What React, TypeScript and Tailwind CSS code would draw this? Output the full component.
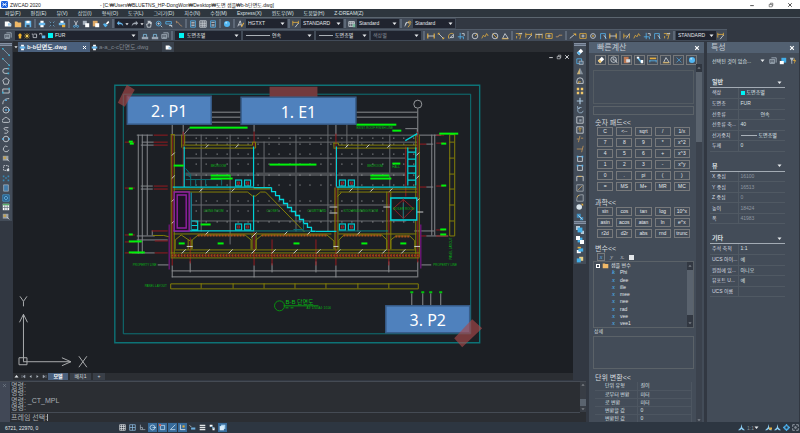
import type { ReactNode } from "react";

const W = "#d5dae0";
const B = "#55b4ee";
const Y = "#e3ad3e";

// 10x10 tool glyphs
const ICONS: Record<string, ReactNode> = {
  new: <><path d="M1 2h5l3 3v3H1z" fill="#fff" /><path d="M5 4h4v3H5z" fill="#9fc9e8" /></>,
  open: <path d="M1 2h3l1 1h4v6H1z" fill="#f0b968" />,
  save: <><path d="M1 1h8v8H1z" fill="#67b7ec" /><path d="M3 1h4v3H3z" fill="#fff" /><path d="M3 6h4v3H3z" fill="#3b4b5c" /></>,
  print: <><path d="M3 1h4v3H3zM3 6h4v3H3z" fill="#fff" /><path d="M1 3.500h8v3H1z" fill="#67b7ec" /></>,
  preview: <><path d="M2 2l6 6M8 2L2 8" stroke="#6fa9d0" /><path d="M3.500 3.500h3v3h-3z" fill="#31404f" /></>,
  publish: <><path d="M3 1h4v3H3z" fill="#fff" /><path d="M1 3.500h8v3H1z" fill="#67b7ec" /><path d="M5 6h4v3H5z" fill={Y} /></>,
  cut: <><path d="M3 1l3 6M7 1L4 7" stroke={W} fill="none" /><circle cx="3" cy="8" r="1.200" stroke={B} fill="none" /><circle cx="7" cy="8" r="1.200" stroke={B} fill="none" /></>,
  copy: <><path d="M1 1h5v5H1z" fill="#a9b4c0" /><path d="M4 4h5v5H4z" fill="#fff" /></>,
  paste: <><path d="M1 1h6v7H1z" fill="#dca765" /><path d="M4 4h5v5H4z" fill="#fff" /></>,
  brush: <><path d="M5 4l3-3 1 2-3 3z" fill="#fff" /><path d="M1 5l3-1 3 3-3 2z" fill={B} /></>,
  undo: <path d="M1 4l3-3v2c4 0 5 2 5 5-1-2-2-3-5-3v2z" fill="#67b7ec" />,
  redo: <path d="M9 4L6 1v2C2 3 1 5 1 8c1-2 2-3 5-3v2z" fill="#a0a8b2" />,
  caret: <path d="M1 3h8l-4 5z" fill="#e8ebee" />,
  caretUp: <path d="M1 7h8L5 2z" fill="#e8ebee" />,
  hand: <path d="M2 5l1 4h4l1-6-1 2V2L6 4V1L5 4 4 1v4z" fill="none" stroke={W} />,
  zoom: <><circle cx="4.500" cy="4.500" r="3" fill="none" stroke={B} /><path d="M7 7l2 2M4.500 3v3M3 4.500h3" stroke={W} /></>,
  zoomWin: <><path d="M1 2h7v3H1z" fill="none" stroke={B} /><path d="M5 7h4M7 6l2 3" stroke={W} /></>,
  zoomPrev: <path d="M1 2l3 1 2 3 3 2M2 1v3" fill="none" stroke="#b28d68" />,
  props: <><path d="M2 1h6v8H2z" fill="none" stroke={B} /><path d="M3 3h4M3 5h4M3 7h4" stroke={W} /></>,
  table: <path d="M1 1h8v8H1zM1 4h8M1 6.500h8M4 1v8M6.500 1v8" fill="none" stroke={W} />,
  tableGreen: <><path d="M1 1h8v8H1z" fill="#fff" /><path d="M1 1h8v2H1z" fill="#59af6c" /><path d="M1 5.500h8M3.500 3v6M6.500 3v6" stroke="#65717d" /></>,
  calc: <><path d="M2 1h6v8H2z" fill="none" stroke={B} /><path d="M3 3h4M4 5v3M6 5v3" stroke={W} /></>,
  help: <><circle cx="5" cy="5" r="3.800" fill="#52b6f2" /><circle cx="4" cy="3.500" r="1.300" fill="#a5def9" /></>,
  text: <><path d="M1 8l3-7 2 7M2 6h3" fill="none" stroke={W} /><path d="M5 8l3-5 1 1-3 5z" fill={Y} /></>,
  dimStyle: <><path d="M1 1v6M8 1v4M1 3h7" stroke={Y} fill="none" /><path d="M4 9l4-5" stroke={W} /></>,
  tableStyle: <><path d="M1 2h7v6H1zM1 4h7M3.500 2v6M6 2v6" stroke={W} fill="none" /><path d="M6 5h3v4H6z" fill="#76b99a" /></>,
  leader: <><path d="M1 8l2-5h4M3 3l-1 3" stroke={W} fill="none" /><circle cx="7" cy="3" r="1.500" fill="none" stroke={Y} /><path d="M5 9l3-4" stroke={Y} /></>,
  layers: <><path d="M1 3h6v5H1z" stroke="#aab6c2" fill="none" /><path d="M3 1h6v6M2 5h4M2 7h4" stroke="#aab6c2" fill="none" /></>,
  layerUp: <><path d="M1 6h8v3H1z" fill="#9aa6b3" /><path d="M3 6V3h4v3" stroke="#7ec1e5" fill="none" /></>,
  bulb: <path d="M5 1a3 3 0 012 5v3H3V6a3 3 0 012-5z" fill="#f3b32b" />,
  sun: <><path d="M1 1l8 8M9 1L1 9M5 0v10M0 5h10" stroke="#d7a72e" /><circle cx="5" cy="5" r="2" fill="#f5d15a" /></>,
  plot: <path d="M1 3h2v5h5V5M4 3h4v3" stroke={W} fill="none" />,
  lock: <><path d="M1 4V2h3v3" stroke={W} fill="none" /><path d="M4 5h5v4H4z" fill="#61b7ea" /></>,
  dimLin: <><path d="M1 2v6M9 2v6" stroke={Y} strokeWidth="1.500" /><path d="M1 5h8" stroke={W} /></>,
  dimAli: <><path d="M2 2l6 6" stroke={W} /><path d="M1 3l2-2M7 9l2-2" stroke={Y} strokeWidth="1.500" /></>,
  dimArc: <><path d="M2 8C1 3 4 1 8 2" stroke={Y} fill="none" /><path d="M3 8l5-5v4H4" stroke={W} fill="none" /></>,
  dimOrd: <><path d="M1 6h7v3M4 1v8" stroke={B} fill="none" /><path d="M6 2h3v3" stroke={W} fill="none" /></>,
  circle: <><circle cx="5" cy="5" r="3.500" fill="none" stroke={W} /><path d="M5 5l3-3" stroke={Y} /></>,
  circleBlue: <><circle cx="5" cy="5" r="3.800" fill="none" stroke={W} /><path d="M4 4h2v2H4zM8 4h2v2H8z" fill={B} /></>,
  jog: <path d="M1 8l2-4 2 2 2-4 2 3" stroke={Y} fill="none" />,
  dia: <><circle cx="5" cy="5" r="3.500" fill="none" stroke={W} /><path d="M2 2l6 6" stroke={Y} /></>,
  angle: <><path d="M2 8l3-6 4 6z" fill="none" stroke={W} /><path d="M1 8.500h8" stroke={Y} /></>,
  quick: <><path d="M1 2h4v3M2 8V5M8 1L6 9" fill="none" stroke={Y} /><path d="M5 2h4" stroke={W} /></>,
  base: <><path d="M1 2v6M5 2v6M9 2v6" stroke={Y} /><path d="M1 3h8" stroke={W} /></>,
  dimBox: <><path d="M1 2h8v6H1z" fill="none" stroke={Y} /><path d="M3 5h4M5 3v4" stroke={W} /></>,
  dimBrk: <path d="M1 6h3l1-2h4" fill="none" stroke="#c99c62" />,
  arrow: <><path d="M1 8l6-5" stroke={W} /><path d="M5 2h4v3z" fill={Y} /></>,
  center: <><circle cx="5" cy="5" r="3" fill="none" stroke={W} /><path d="M4 5h2M5 4v2" stroke={Y} /></>,
  inspect: <><path d="M2 9V2h6v7" stroke={B} fill="none" /><path d="M6 4l3 4" stroke={W} /></>,
  edit: <><path d="M1 2v6M8 2v6M1 5h4" stroke={Y} /><path d="M4 8l4-6" stroke={W} /></>,
  line: <><path d="M1 1l8 8" stroke="#91a0af" /><path d="M0 0h2v2H0zM8 8h2v2H8z" fill="#39a9ce" /></>,
  pline: <><path d="M8 2H4a2.500 2.500 0 000 6h4" fill="none" stroke={W} /><path d="M7 1h2v2H7zM7 7h2v2H7z" fill="#39a9ce" /></>,
  poly: <path d="M5 1l4 3-1.500 5h-5L1 4z" fill="none" stroke={W} />,
  rect: <><path d="M1 2.500h8v5H1z" stroke={W} fill="none" /><path d="M0 6h2v2H0zM8 1h2v2H8z" fill="#39a9ce" /></>,
  arc: <><path d="M1 9c0-5 3-7 8-7" fill="none" stroke={W} /><path d="M4 3h2v2H4z" fill={B} /></>,
  cloud: <path d="M2 8a2 2 0 010-4c1-3 5-3 6 0a2 2 0 010 4z" fill="none" stroke={W} />,
  spline: <path d="M8 2H4C1 3 3 5 5 5s4 2 1 4H3" fill="none" stroke={W} />,
  ellipse: <><circle cx="5" cy="5" r="3.500" fill="none" stroke={W} /><path d="M0 4h2v2H0zM8 4h2v2H8z" fill={B} /></>,
  earc: <path d="M7 2a3.500 3.500 0 10 1.500 4" fill="none" stroke={W} />,
  block: <><path d="M1 1h7v6H1z" fill="#9ba1a5" /><path d="M2 2h3v3H2z" fill="#c0a050" /><path d="M6 5l3 3" stroke={W} /></>,
  mkBlock: <><path d="M2 2h6v6H2z" fill="none" stroke={W} strokeDasharray="2 1" /><path d="M6 6h3v3H6z" fill={W} /></>,
  point: <path d="M1 2h2v2H1zM7 2h2v2H7zM4 4h2v2H4zM1 7h2v2H1zM7 7h2v2H7z" fill="#3788b4" />,
  hatch: <><path d="M2 1h6v8H2z" fill="#427ba9" stroke={W} strokeWidth=".6" /></>,
  region: <><path d="M1 1h8v8H1z" fill="#275b84" stroke="#4699d0" /><circle cx="5" cy="5" r="2" fill="none" stroke="#6cb9e7" /></>,
  eraser: <><path d="M1 6l5-5 3 3-5 5z" fill="#fff" /><path d="M1 6l2-2 3 3-2 2z" fill="#5bb5eb" /></>,
  clear: <><path d="M1 6l5-5 3 3-5 5z" fill="#fff" /><path d="M1 6l2-2 3 3-2 2z" fill="#ecc46c" /></>,
  copyBlue: <><path d="M1 1h6v6H1z" fill="none" stroke={B} /><path d="M4 4h5v4H4z" fill="#516d84" stroke={W} strokeWidth=".7" /></>,
  mirror: <><path d="M5 1v8H1z" fill="#c9b27a" /><path d="M5 1l4 8H5z" fill="#848f9a" /></>,
  offset: <><path d="M1 8V5a4 4 0 018 0v3z" fill="none" stroke={W} /><path d="M3 8V6h3" stroke={Y} fill="none" /></>,
  array: <path d="M1 1h3v3H1zM6 1h3v3H6zM1 6h3v3H1zM6 6h3v3H6z" fill="#f1c76a" />,
  move: <path d="M5 1v8M1 5h8" stroke="#a9c5dc" strokeWidth="1.500" />,
  rotate: <path d="M7 2a3.500 3.500 0 102 4M2 0v3h3" fill="none" stroke="#9dbad2" />,
  scale: <><path d="M1 1h8v8H1z" fill="none" stroke={W} /><path d="M4 4h3v3H4z" fill="#8b97a2" /></>,
  stretch: <><path d="M1 1h8v8H1z" fill="none" stroke={W} /><path d="M5 7V3M3 4l2-2 2 2" stroke={Y} fill="none" /></>,
  trim: <path d="M1 5h3M6 4h3M5 1L3 9" fill="none" stroke="#c49758" />,
  extend: <path d="M1 5h7M9 1L7 9" fill="none" stroke="#c49758" />,
  brk: <><path d="M2 2h6v6H2z" fill="none" stroke={W} /><path d="M1 1h2v2H1zM7 1h2v2H7z" fill={B} /></>,
  join: <><path d="M1 9V3h8v6" fill="none" stroke={W} /><path d="M3 3h4" stroke={Y} /></>,
  chamfer: <><path d="M1 1h8v8H1z" fill="none" stroke="#a8b0b8" /><path d="M2 8l6-6" stroke="#ba9a64" /></>,
  fillet: <><path d="M1 9V6a5 5 0 015-5h3v8z" fill="none" stroke="#a8b0b8" /><path d="M1 4l3-3" stroke={Y} /></>,
  explode: <><circle cx="4" cy="5" r="3.500" fill="#d9e4eb" /><path d="M6 1h3v3z" fill={Y} /></>,
  pack: <><path d="M1 1h5v5H1zM5 5h4v4H5z" fill="#408fc0" /><path d="M3 3l5 5" stroke={W} /></>,
  front: <><path d="M0 0h5v5H0zM6 6h4v4H6z" fill="#b7c9d5" /><path d="M2 2h6v6H2z" fill="#43afe9" /></>,
  back: <><path d="M2 2h6v6H2z" fill="#43afe9" /><path d="M0 0h5v5H0zM5 5h5v5H5z" fill="#fff" /></>,
  above: <><path d="M1 5h5v4H1z" fill="#fff" /><path d="M3 3h6v4H3z" fill="#43afe9" /><path d="M2 1h4v2H2z" fill={Y} /></>,
  below: <><path d="M4 1h5v5H4z" fill="#e7cf86" /><path d="M1 3h5v5H1z" fill="#43afe9" /></>,
  select: <><path d="M3 1h6v6H3z" fill="#43afe9" /><path d="M1 5h5v4H1z" fill="#fff" /></>,
  filter: <><path d="M1 1h5L4 5v4L3 8V5z" fill="#b9c3cc" /><path d="M7 1L5 5h2L6 9l3-5H7z" fill={Y} /></>,
  clock: <><circle cx="4.500" cy="4.500" r="3.500" fill="none" stroke={W} /><path d="M4 2v3h3l2 4" stroke={W} fill="none" /></>,
  pasteVal: <><path d="M1 1h6v8H1z" fill="#be7954" /><path d="M4 4h5v4H4z" fill={W} /></>,
  pick: <><path d="M2 2l5 6" stroke="#63b8e8" strokeWidth="2" /><path d="M1 1h3v2H1zM6 5h3v4H6z" fill="#fff" /></>,
  dist: <><path d="M1 2h8v2H1z" fill={Y} /><path d="M1 6h8M1 5v3M9 5v3" stroke={B} /></>,
  cross: <path d="M2 2l6 6M8 2L2 8" stroke="#4b9ad0" />,
  x: <path d="M2 2l6 6M8 2L2 8" stroke="#fff" strokeWidth="2" />,
  xGray: <path d="M2 2l6 6M8 2L2 8" stroke="#858e99" />,
  min: <path d="M2 6h6" stroke="currentColor" strokeWidth="1.500" />,
  max: <path d="M2 4h5v4H2zM4 4V2h4v4H7" fill="none" stroke="currentColor" />,
  close: <path d="M2 2l6 6M8 2L2 8" stroke="currentColor" strokeWidth="1.500" />,
  grid: <path d="M1 1h8v8H1zM1 5h8M5 1v8" stroke="#8fc0e6" fill="none" />,
  snap: <path d="M1 1h8v8H1zM1 3.500h8M1 6.500h8M3.500 1v8M6.500 1v8" stroke="#e2e5e8" fill="none" />,
  ortho: <path d="M2 1v7h7M2 5h3v3" stroke="#a8b3be" fill="none" />,
  polar: <><circle cx="5" cy="5" r="3.500" stroke="#cfe5f7" fill="none" /><path d="M5 5h5" stroke="#cfe5f7" /></>,
  osnap: <><path d="M2 2h6v6H2z" stroke="#cfe5f7" fill="none" /><path d="M0 0h3v3H0z" fill="#c8655e" /></>,
  track: <path d="M9 1L2 8h7" stroke="#d7e9f8" fill="none" />,
  ucs: <><path d="M2 1v7h7" stroke="#fff" fill="none" /><path d="M5 2h3v3H5z" fill={Y} /></>,
  dyn: <><path d="M1 2l2 2" stroke="#fff" /><path d="M3 5h6v3H3z" fill="#6faedc" /></>,
  lw: <path d="M1 2h8M1 5h8M1 8h8" stroke="#e3e6e8" strokeWidth="2" />,
  cycle: <><path d="M1 1h4v3H1zM5 5h3v4H5z" fill="#fff" /><path d="M3 3l4 4" stroke={B} /></>,
  modelSpace: <><path d="M3 1h6v6H3z" fill="#aad5f3" /><path d="M1 3h6v6H1z" fill="#d9ecf9" /></>,
  anno: <path d="M5 0l1 5 4 4H7L5 7 3 9H0l4-4z" fill="#8ccdf3" />,
  annoY: <><path d="M5 0l1 5 4 4H7L5 7 3 9H0l4-4z" fill="#8ccdf3" /><path d="M6 5h4v3H6z" fill={Y} /></>,
  gear: <><circle cx="5" cy="5" r="2.700" fill="none" stroke="#49a9e4" strokeWidth="2" /><path d="M5 0v2M5 8v2M0 5h2M8 5h2" stroke="#49a9e4" strokeWidth="2" /></>,
  full: <path d="M1 4V1h3M6 1h3v3M9 6v3H6M4 9H1V6M4 4h2v2H4z" fill="none" stroke="#b8c0c8" />,
  logo: <><rect width="10" height="10" rx="2" fill="#1c62e0" /><path d="M2 2l6 6M8 2L2 8M2 5h6" stroke="#fff" fill="none" /></>,
  first: <path d="M2 2v6M8 2L4 5l4 3z" stroke="#9aa3ad" fill="#9aa3ad" />,
  prev: <path d="M7 2L3 5l4 3z" fill="#b0b8c0" />,
  next: <path d="M3 2l4 3-4 3z" fill="#b0b8c0" />,
  last: <path d="M8 2v6M2 2l4 3-4 3z" stroke="#9aa3ad" fill="#9aa3ad" />,
};

function Icon({ name, className = "size-[8px]" }: { name: string; className?: string }) {
  return (
    <svg viewBox="0 0 10 10" className={`shrink-0 ${className}`} aria-hidden="true">
      {ICONS[name]}
    </svg>
  );
}

function Tool({ name }: { name: string }) {
  return (
    <button aria-label={name} className="flex w-[10px] shrink-0 items-center justify-center">
      <Icon name={name} />
    </button>
  );
}

const Sep = () => <div className="mx-px h-[9px] w-[2px] shrink-0 bg-[#5d6877]" />;

function Tools({ names }: { names: string[] }) {
  return <>{names.map((n, i) => (n === "|" ? <Sep key={i} /> : <Tool key={i} name={n} />))}</>;
}

type ComboProps = { label: string; value: string; width: string; color?: string; children?: ReactNode };

function Combo({ label, value, width, color = "text-[#e2e5e9]", children }: ComboProps) {
  return (
    <div className={`flex h-[9px] shrink-0 items-center gap-px bg-[#20242f] px-[2px] ${width} ${color}`}>
      {children}
      <select aria-label={label} className="h-[9px] min-w-0 flex-1 appearance-none bg-transparent text-[5px] leading-[9px]">
        <option>{value}</option>
      </select>
      <Icon name="caret" className="size-[5px]" />
    </div>
  );
}

const MENUS = ["파일(F)", "편집(E)", "뷰(V)", "삽입(I)", "형식(O)", "도구(L)", "그리기(D)", "치수(N)", "수정(M)", "Express(X)", "윈도우(W)", "도움말(H)", "Z-DREAM(Z)"];

const TOP_TOOLS = ["new", "open", "save", "|", "print", "preview", "publish", "|", "cut", "copy", "paste", "brush", "|"];
const VIEW_TOOLS = ["hand", "zoom", "zoomWin", "zoomPrev", "|", "props", "table", "calc", "|", "help", "|"];
const DIM_TOOLS = ["dimLin", "dimAli", "dimArc", "dimOrd", "|", "circle", "jog", "dia", "angle", "|", "quick", "dimStyle", "base", "dimBox", "dimBrk", "|", "arrow", "dimBox", "center", "inspect", "dimLin", "|", "edit", "jog", "dimOrd", "inspect", "quick", "|"];

const DRAW_TOOLS = ["line", "line", "pline", "poly", "rect", "arc", "circleBlue", "cloud", "spline", "ellipse", "earc", "block", "mkBlock", "point", "hatch", "region", "tableGreen", "block"];
const MODIFY_TOOLS = ["eraser", "copyBlue", "mirror", "offset", "array", "move", "rotate", "scale", "stretch", "trim", "extend", "brk", "brk", "join", "chamfer", "fillet", "explode", "pack"];
const ORDER_TOOLS = ["front", "back", "above", "below"];

const KEYPAD = ["C", "<--", "sqrt", "/", "1/x", "7", "8", "9", "*", "x^2", "4", "5", "6", "+", "x^3", "1", "2", "3", "-", "x^y", "0", ".", "pi", "(", ")", "=", "MS", "M+", "MR", "MC"];
const SCIENCE = ["sin", "cos", "tan", "log", "10^x", "asin", "acos", "atan", "ln", "e^x", "r2d", "d2r", "abs", "rnd", "trunc"];
const VARIABLES = ["Phi", "dee", "ille", "mee", "nee", "rad", "vee", "vee1"];
const UNITS = [["단위 유형", "길이"], ["로부터 변환", "미터"], ["로 변환", "미터"], ["변환할 값", "0"], ["변환된 값", "0"]];

function VerticalTools({ names }: { names: string[] }) {
  return (
    <div className="flex flex-col bg-[#434c58]">
      <div className="mb-[2px] h-[3px] border-y border-[#8490a2] bg-[#5f6b7c]" />
      <div className={`flex flex-col justify-between ${names.length > 4 ? "h-[173px]" : "h-[38px]"}`}>
        {names.map((n, i) => (
          <button key={i} aria-label={n} className="flex justify-center">
            <Icon name={n} />
          </button>
        ))}
      </div>
    </div>
  );
}

function DocTab({ name, active }: { name: string; active?: boolean }) {
  return (
    <button className={`flex h-[11px] w-[72px] items-center gap-px px-px text-[6px] ${active ? "bg-[#4a607d] font-bold text-[#eef1f4]" : "bg-[#2e333b] text-[#808790]"}`}>
      <Icon name="print" className="size-[7px]" />
      <span className="flex-1 whitespace-nowrap text-left">{name}</span>
      {active && <Icon name="x" className="mr-[2px] size-[5px]" />}
    </button>
  );
}

// Drawing on the model space

const GREEN_BARS = [
  [190, 127, 58], [174, 165, 10], [270, 164, 47], [211, 175, 20], [211, 178, 22], [357, 124, 40], [393, 130, 9], [393, 163, 8],
  [371, 175, 19], [371, 178, 21], [440, 133, 19], [442, 143, 5], [442, 185, 5], [129, 141, 4], [129, 188, 4], [129, 234, 4],
  [129, 241, 13], [129, 252, 16], [179, 243, 6], [218, 243, 6], [201, 224, 10], [294, 243, 6], [362, 243, 6], [401, 243, 6],
  [441, 229, 6], [441, 234, 6], [130, 143, 4],
];
const DOT_X = Array.from({ length: 22 }, (_, i) => 196 + Math.round(i * 10.4));
const DOT_Y = [138, 144, 154, 164, 175, 185, 201, 211, 222];
const CHAIRS = [[236, 180], [245, 180], [236, 224], [245, 224], [340, 180], [349, 180], [340, 224], [349, 224]];
const LABELS: [string, number, number][] = [
  ["BEDROOM", 211, 167], ["BEDROOM", 368, 167], ["HALL", 393, 168], ["LIVING ROOM", 204, 213], ["CLOSET", 267, 213],
  ["COURTYARD", 308, 213], ["KITCHEN/DINING ROOM", 344, 213], ["PROPERTY LINE", 133, 267], ["PROPERTY LINE", 434, 267],
  ["PANEL LAYOUT", 145, 288], ["A3: 1/50 A4: 1/100", 307, 310],
];
const BAYS = [
  "M175.500 249.500v-9l6-5 9 6", "M192.500 249.500v-9l6-5h47l6 5v9", "M256.500 249.500v-9l6-5h65l7 6v8",
  "M339.500 249.500v-9l5-5h38l5 5v9", "M391.500 249.500v-9l5-4h14l5 5v8",
];
const STAIRS = "M272 188" + "v4h4".repeat(11);

const LABEL_BOXES = [
  { text: "2. P1", x: 127, y: 96, w: 85, h: 29 },
  { text: "1. E1", x: 241, y: 97, w: 116, h: 28 },
  { text: "3. P2", x: 386, y: 306, w: 85, h: 28 },
];

function Drawing() {
  return (
    <svg viewBox="13 53 561 320" className="block size-full" role="img" aria-label="b-b 단면도">
      <g fill="none" stroke="#0d7377">
        <path d="M115 85.500h365.500v258H115z" strokeWidth="1.400" />
        <path d="M123.500 94.500h348v240h-348z" />
      </g>

      {/* construction grid and dimension lines */}
      <path
        fill="none"
        stroke="#686b6f"
        d="M172 135.500h246M184 142.500h234M186 158.500h220M186 175.500h220M192 205.500h215M192 221.500h215M201.500 135v97M230.500 135v110M264.500 142v46M296.500 135v97M328.500 125v107M347.500 118v30M358.500 135v97M390.500 135v53"
      />
      <path d="M186 173h68v3h-68zM256 173h80v3h-80zM339 173h67v3h-67z" fill="#4b4e52" />
      <path
        fill="none"
        stroke="#8b8e91"
        d="M212 112.500h29M212 117.500h29M212 122.500h29M357 112.500h61M357 117.500h61M418.500 109v26M172.500 125v10M183.500 125v10M254.500 125v7M336.500 125v10M184 135l6-7M172 271.500h246M172 277.500h246M172.500 266v12M190.500 262v11M254.500 266v12M272.500 264v9M316.500 262v11M336.500 266v12M389.500 262v11M418.500 262v16M158 265.500h11M422 265.500h10M412.500 294v12M423.500 294v12M431.500 294v12M441.500 294v12"
      />
      <path
        fill="none"
        stroke="#85888c"
        d="M137 135.500h16M138.500 135v119M142.500 135v119M147.500 135v101M142 142.500h12M141 145.500h13M141 186.500h12M141 189.500h12M137 236.500h18M137 240.500h31M132 253.500h23M152.500 231v5M420 135.500h22M432.500 135v101M435.500 135v101M427 144.500h7M427 187.500h7M415 231.500h20M427 236.500h22M406 129h12v8"
      />
      <circle cx="418.500" cy="104.500" r="4" fill="none" stroke="#96999c" />
      {DOT_Y.map((y) => DOT_X.map((x) => <rect key={`${x}-${y}`} x={x} y={y} width="1" height="1" fill="#b5b7b9" />))}

      {/* red centre lines */}
      <path
        fill="none"
        stroke="#961a1f"
        d="M154 135.500h14M154 142.500h14M154 145.500h14M154 186.500h14M154 189.500h14M152 231.500h16M155 241.500h13M155 253.500h13M125 142.500h10M125 188.500h10M125 235.500h10M125 242.500h10M125 253.500h10M172.500 135v131M183.500 132v55M190.500 238v26M254.500 132v16M254.500 232v34M272.500 240v26M316.500 240v26M336.500 134v132M389.500 192v74M418.500 132v131M406.500 147v50M420 144.500h7M420 187.500h7M420 236.500h7M437 135.500h8M437 143.500h8M437 186.500h8M437 230.500h8M437 236.500h12"
      />

      {/* walls, slabs and foundation */}
      <path
        fill="none"
        stroke="#858008"
        d="M171.500 135v123M174.500 135v123M182 135v13M185 135v10M171 135h4M183 145.500h70v-3h3v6h-73M334 143.500h5v2h79M334 148.500h84M334.500 143v5M254 188.500h17M174 189.500h97M174 192.500h74l5 4h3l5-4h5l39 40M335.500 188v62M338.500 188v62M338 189.500h80M340 192.500h78M338 197l4-4M387.500 192v58M391.500 192v58M416.500 135v123M420 135v123M174 234.500h158M339 234.500h78M188.500 240v10M191.500 240v10M252.500 235v15M256.500 235v15M175 250.500h242M171 253.500h249M171 258.500h249M153 236h11l6 1.500"
      />
      <path d={BAYS.join("")} fill="none" stroke="#858008" />
      <path d="M198 236h47M262 236h65M344 236h38M396 237h14" stroke="#a9511b" strokeWidth="2" strokeDasharray="2 1" />
      <path d="M172 256h248" stroke="#8d2917" strokeWidth="3" strokeDasharray="2 1" />
      <path d="M172 256h248" stroke="#9c7414" strokeDasharray="1 2" />
      <path d="M171 284.500h248v5H171zM201.500 284v5M233.500 284v5M264.500 284v5M295.500 284v5M326.500 284v5M358.500 284v5M389.500 284v5" fill="none" stroke="#858008" />
      <path d="M450.500 135v101.500h5V135zM450 142.500h5M450 158.500h5M450 174.500h5M450 189.500h5M450 205.500h5M450 221.500h5" fill="none" stroke="#858008" />
      <path
        stroke="#c9cbcc"
        d="M206 148l3-3M236 148l3-3M346 148l3-3M367 148l3-3M388 148l3-3M200 192l3-3M232 192l3-3M350 192l3-3M371 192l3-3M390 192l3-3M172 156l3-3M172 179l3-3M172 202l3-3M172 224l3-3M182 254l4-4M206 254l4-4M229 254l4-4M252 254l4-4M272 254l4-4M294 254l4-4M317 254l4-4M337 254l4-4M359 254l4-4M383 254l4-4M402 254l4-4M252 238l5-5M206 235l3-3M285 235l3-3M308 235l3-3M358 235l3-3M417 156l3-3M417 179l3-3M417 202l3-3M330 207.500h8M330 213.500h8M384 207.500h8M414 212.500h10M415 247h6M187 247h6M334 247h5"
      />

      {/* glazing, stairs and fittings */}
      <path
        fill="none"
        stroke="#00d0d6"
        strokeWidth="1.200"
        d="M184.500 147v40M254 147v40M173 187.500h81M254 196v36M337 147v40M337 187.500h80M254 188h18M174 231.500h80M316 232h21M406 141l12-7M408.500 148v38M416.500 148v38M408 152.500h8M408 159.500h8M408 166.500h8M408 173.500h8M408 180.500h8M192 221.500h6v9h-6M192 226h6"
      />
      <path d="M254 231.500h62M339 231.500h50" stroke="#0c8085" />
      <path d={STAIRS} fill="none" stroke="#00d8de" strokeWidth="1.300" />
      <path d="M186 169l5 6v12M186 174l5 4M186 180h36v6M196 187v-7M206 187v-7M294 230h10v-6" fill="none" stroke="#0d6e74" />
      <path d="M391.500 198.500h26v22h-26z" fill="#191c21" stroke="#00d8de" strokeWidth="1.400" />
      <path d="M404 199v20M394 209l10-9 10 9-10 10z" stroke="#902027" fill="none" />
      <path d="M404 203v16" stroke="#0d8085" />
      <path d="M174.500 192.500h15v39h-15zM177.500 195.500h9v33h-9z" fill="#1c1424" stroke="#9420a4" strokeWidth="1.400" />
      <path d="M191.500 193v39" stroke="#16acc4" />
      <path d="M169.500 225v45M421.500 225v44" stroke="#6c1678" strokeWidth="1.400" />
      {CHAIRS.map(([x, y]) => (
        <g key={`${x}-${y}`} fill="none">
          <rect x={x} y={y + 0.5} width="6" height="6" stroke="#00c6cc" strokeWidth="1.200" />
          <rect x={x + 2} y={y + 2.5} width="2" height="2" stroke="#96242b" />
        </g>
      ))}
      {GREEN_BARS.map(([x, y, w]) => <rect key={`${x}-${y}`} x={x} y={y} width={w} height="2" fill="#00f40a" />)}
      <path d="M411 292h3v2h-3zM422 292h3v2h-3zM430 292h3v2h-3zM440 292h3v2h-3z" fill="#00c80a" />

      <g fill="#08b814" fontSize="3">
        {LABELS.map(([t, x, y]) => <text key={`${t}-${x}`} x={x} y={y}>{t}</text>)}
        <text x="357" y="129">EXIST. ROOF FINISH LINE</text>
        <text x="394" y="211">BOILER ROOM</text>
        <text transform="translate(453 260) rotate(-90)">PANEL LAYOUT</text>
        <text x="286" y="305" fontSize="6">B-B 단면도</text>
      </g>
      <path d="M284 306.500h35M286 308.500h3M291 308.500h3" stroke="#08a012" />
      <circle cx="280" cy="306.500" r="5" fill="none" stroke="#08900f" />

      {/* UCS icon */}
      <g fill="none" stroke="#a9abad">
        <path d="M23.500 362V315M19.500 323l4-8 4 8M23 362.500h48M62 358.500l9 4-9 4M19 358.500h8v7h-8z" />
        <path d="M20 297l3.500 5v5M27 297l-3.500 5M79 357l8 11M87 357l-8 11" />
      </g>

      <path d="M270 87h48v12h-48z" fill="#733a3d" />
      {LABEL_BOXES.map((b) => (
        <g key={b.text}>
          <rect x={b.x + 0.5} y={b.y + 0.5} width={b.w - 1} height={b.h - 1} fill="#4f81bd" stroke="#385d8a" strokeWidth="1.500" />
          <text x={b.x + b.w / 2} y={b.y + 21} textAnchor="middle" fontSize="16" fill="#fff" className="font-['Noto_Sans',sans-serif]">
            {b.text}
          </text>
        </g>
      ))}
      <path d="M127 85l8 5-10 17-7-4zM473 320l10 9-20 19-8-9z" fill="#a8484a" opacity=".65" />
    </svg>
  );
}

function PanelHeader({ title }: { title: string }) {
  return (
    <div className="flex h-[11px] shrink-0 items-center justify-between bg-[#526071] px-[4px]">
      <h2 className="text-[8px] leading-[11px] text-[#c5ccd4]">{title}</h2>
      <button aria-label={`${title} 닫기`}><Icon name="x" className="size-[6px]" /></button>
    </div>
  );
}

function Keys({ keys }: { keys: string[] }) {
  return (
    <div className="mx-[4px] grid grid-cols-5 gap-x-[3px] gap-y-[2px]">
      {keys.map((k) => (
        <button key={k} className="h-[9px] border border-[#77797b] text-center text-[5px] leading-[7px] text-[#e6e9ec]">{k}</button>
      ))}
    </div>
  );
}

function SectionTitle({ children }: { children: ReactNode }) {
  return <h3 className="h-[9px] pl-[2px] text-[7px] leading-[9px] text-[#d5dade]">{children}</h3>;
}

function Calculator() {
  return (
    <section className="flex w-[115px] shrink-0 flex-col overflow-hidden bg-[#434c58]">
      <div className="bg-[#526071] pl-[4px]"><PanelHeader title="빠른계산" /></div>
      <div className="flex min-h-0 flex-1">
        <div className="min-w-0 flex-1 pl-[4px] pr-[2px]">
          <div className="-mr-[6px] mb-[5px] ml-[2px] mt-[2px] flex gap-[2px]">
            {["clear", "clock", "pasteVal", "pick", "dist", "angle", "cross", "help"].map((n) => (
              <button key={n} aria-label={n} className="flex h-[10px] w-[11px] shrink-0 items-center justify-center border border-[#77797b]">
                <Icon name={n} />
              </button>
            ))}
          </div>
          <div className="mb-[2px] h-[34px] border border-[#535b62]" />
          <input aria-label="계산식" className="mb-[3px] block h-[9px] w-full border border-[#5b6268] bg-transparent text-[5px]" />
          <SectionTitle>숫자 패드&lt;&lt;</SectionTitle>
          <Keys keys={KEYPAD} />
          <div className="h-[7px]" />
          <SectionTitle>과학&lt;&lt;</SectionTitle>
          <Keys keys={SCIENCE} />
          <div className="h-[6px]" />
          <SectionTitle>변수&lt;&lt;</SectionTitle>
          <div className="ml-[4px] flex h-[8px] items-center gap-[2px] font-['Liberation_Serif',serif] text-[6px] italic leading-[8px]">
            <button className="h-[8px] w-[8px] border border-[#77797b] leading-[6px] text-[#5caee0]">x</button>
            <button className="w-[9px] text-[#b4bac0]">y</button>
            <button className="w-[9px] text-[#b4bac0]">x.</button>
            <button aria-label="계산기로 복귀" className="h-[5px] w-[5px] bg-[#e2e5e8]" />
          </div>
          <div className="flex h-[67px] border border-[#5b6268]">
            <ul className="flex flex-1 flex-col justify-between text-[5px] leading-[7px] text-[#e2e6ea]">
              <li className="flex h-[7px] items-center gap-[2px] pl-[2px]">
                <span className="size-[4px] border border-white bg-[#434c58]" />
                <Icon name="open" className="size-[7px]" />
                샘플 변수
              </li>
              {VARIABLES.map((v, i) => (
                <li key={v} className="flex h-[7px] gap-[3px] pl-[18px]">
                  <i className="w-[5px] font-['Liberation_Serif',serif] text-[6px] font-bold text-[#4ba2dc]">{i ? "x" : "k"}</i>
                  {v}
                </li>
              ))}
            </ul>
            <div className="flex w-[6px] flex-col items-center justify-between bg-[#323842]">
              <div className="flex h-[8px] items-center"><Icon name="caretUp" className="size-[4px] opacity-40" /></div>
              <div className="w-full flex-1 bg-[#5a636e]" />
              <div className="flex h-[12px] items-end pb-[2px]"><Icon name="caret" className="size-[4px] opacity-40" /></div>
            </div>
          </div>
          <h4 className="h-[8px] pl-px text-[5px] leading-[7px] text-[#d6dade]">상세</h4>
          <div className="h-[33px] border border-[#5b6268]" />
          <div className="h-[4px]" />
          <SectionTitle>단위 변환&lt;&lt;</SectionTitle>
          <table className="ml-[2px] w-[97px] text-[5px] leading-[7px] text-[#dde1e5]">
            <tbody>
              {UNITS.map(([k, v]) => (
                <tr key={k} className="h-[8px] border-b border-r border-[#4d5661]">
                  <th className="w-[42px] whitespace-nowrap border-r border-[#4d5661] pl-[10px] text-left font-normal">{k}</th>
                  <td className="pl-[3px]">{v}</td>
                </tr>
              ))}
            </tbody>
          </table>
        </div>
        <div className="mr-[2px] mt-[11px] flex w-[6px] flex-col items-center bg-[#3b424d]">
          <div className="flex h-[8px] w-full items-center justify-center bg-[#303640]"><Icon name="caretUp" className="size-[4px] opacity-40" /></div>
          <div className="h-[70px] w-full bg-[#5a636e]" />
          <div className="flex-1" />
          <Icon name="caret" className="size-[4px] opacity-40" />
        </div>
      </div>
    </section>
  );
}

type Row = [string, ReactNode];

const GENERAL: Row[] = [
  ["색상", <span className="flex items-center gap-[2px]"><span className="size-[4px] bg-[#00f4f4]" />도면층별</span>],
  ["도면층", "FUR"],
  ["선종류", <span className="pl-[20px]">연속</span>],
  ["선종류 축...", "40"],
  ["선가중치", <span className="flex items-center gap-[2px]"><span className="h-px w-[16px] bg-[#aab1b9]" />도면층별</span>],
  ["두께", "0"],
];
const VIEW: Row[] = [["X 중심", "16100"], ["Y 중심", "16513"], ["Z 중심", "0"], ["높이", "18424"], ["폭", "41983"]];
const MISC: Row[] = [["주석 축척", "1:1"], ["UCS 아이...", "예"], ["원점에 있...", "아니오"], ["뷰포트 U...", "예"], ["UCS 이름", ""]];

function PropGroup({ title, rows, dim }: { title: string; rows: Row[]; dim?: boolean }) {
  return (
    <div className="mb-[9px] w-[75px]">
      <div className="flex h-[11px] items-center justify-between border-b border-[#a3abb4] pl-[2px] pr-[3px]">
        <h3 className="text-[6px] font-bold leading-[10px] text-[#dfe3e7]">{title}</h3>
        <Icon name="caret" className="size-[5px]" />
      </div>
      <table className="w-full table-fixed text-[5px] leading-[9px]">
        <tbody>
          {rows.map(([k, v], i) => (
            <tr key={k} className={`border-b border-[#505963] ${i % 2 ? "h-[11px]" : "h-[10px]"}`}>
              <th className="w-[28px] whitespace-nowrap border-r border-[#505963] pl-[2px] text-left font-normal text-[#d8dce1]">{k}</th>
              <td className={`whitespace-nowrap pl-[2px] ${dim ? "text-[#8f97a1]" : "text-[#dde1e5]"}`}>{v}</td>
            </tr>
          ))}
        </tbody>
      </table>
    </div>
  );
}

function Properties() {
  return (
    <section className="w-[92px] shrink-0 bg-[#434c58]">
      <PanelHeader title="특성" />
      <div className="mb-[11px] mt-[2px] flex h-[11px] items-center pl-[5px]">
        <select aria-label="선택" className="w-[48px] appearance-none bg-transparent text-[5px] leading-[10px] text-[#dfe3e7]">
          <option>선택된 것이 없습...</option>
        </select>
        <Icon name="caret" className="mr-[3px] size-[5px]" />
        <Tools names={["layers", "select", "filter"]} />
      </div>
      <div className="pl-[3px]">
        <PropGroup title="일반" rows={GENERAL} />
        <PropGroup title="뷰" rows={VIEW} dim />
        <PropGroup title="기타" rows={MISC} />
      </div>
    </section>
  );
}

const STATUS = [
  { icon: "snap" }, { icon: "grid" }, { icon: "ortho" }, { icon: "polar", on: true }, { icon: "osnap", on: true },
  { icon: "track", on: true }, { icon: "ucs", on: true }, { icon: "dyn" }, { icon: "lw" }, { icon: "cycle" }, { icon: "modelSpace", on: true },
];

export default function App() {
  return (
    <div className="flex h-screen flex-col overflow-hidden bg-[#323842] font-['Liberation_Sans','Noto_Sans_CJK_KR',sans-serif] text-[5px] leading-[8px]">
      <header className="flex h-[9px] shrink-0 items-center bg-white text-[#222]">
        <Icon name="logo" className="ml-px size-[7px]" />
        <span className="ml-[2px] w-[90px]">ZWCAD 2020</span>
        <h1 className="flex-1 whitespace-nowrap">- [C:₩Users₩BLUETNS_HP-DongWon₩Desktop₩도면 샘플₩b-b단면도.dwg]</h1>
        <div className="flex gap-[13px] pr-[7px] text-[#444]">
          <button aria-label="최소화"><Icon name="min" className="size-[6px]" /></button>
          <button aria-label="복원"><Icon name="max" className="size-[6px]" /></button>
          <button aria-label="닫기"><Icon name="close" className="size-[6px]" /></button>
        </div>
      </header>

      <nav className="flex h-[9px] shrink-0 items-center gap-[10px] border-b border-[#5c6670] bg-[#2e363e] pl-[5px] text-[#dde1e4]">
        {MENUS.map((m) => <button key={m} className="whitespace-nowrap">{m}</button>)}
      </nav>

      <div className="flex h-[11px] w-[456px] shrink-0 items-center bg-[#414a57] pl-[3px]">
        <Tools names={TOP_TOOLS} />
        <div className="flex h-[9px] w-[29px] shrink-0 items-center justify-between bg-[#20242f]">
          <Tool name="undo" />
          <Icon name="caret" className="size-[4px]" />
          <Tool name="redo" />
          <Icon name="caret" className="size-[4px]" />
        </div>
        <Tools names={VIEW_TOOLS} />
        <Tool name="text" />
        <Combo label="문자 스타일" value="HGTXT" width="w-[41px]" />
        <Sep />
        <Tool name="dimStyle" />
        <Combo label="치수 스타일" value="STANDARD" width="w-[42px]" />
        <Sep />
        <Tool name="tableStyle" />
        <Combo label="표 스타일" value="Standard" width="w-[42px]" />
        <Sep />
        <Tool name="leader" />
        <Combo label="지시선 스타일" value="Standard" width="w-[42px]" />
      </div>

      <div className="flex h-[12px] w-[727px] shrink-0 items-center border-t border-[#525c69] bg-[#414a57] pl-[3px]">
        <Tool name="layers" />
        <Combo label="도면층" value="FUR" width="mx-[2px] w-[123px]">
          <Icon name="bulb" className="size-[6px]" />
          <Icon name="sun" className="size-[6px]" />
          <Icon name="plot" className="size-[7px]" />
          <Icon name="lock" className="size-[7px]" />
          <span className="mx-px size-[5px] bg-[#00f4f4]" />
        </Combo>
        <Tools names={["layerUp", "layerUp", "layers", "|"]} />
        <Combo label="색상" value="도면층별" width="mx-px w-[66px]">
          <span className="mx-[2px] size-[5px] bg-[#00f4f4]" />
        </Combo>
        <Combo label="선종류" value="연속" width="mx-px w-[71px]">
          <span className="mx-px h-px w-[24px] bg-[#aab0b6]" />
        </Combo>
        <Combo label="선가중치" value="도면층별" width="mx-px w-[53px]">
          <span className="mx-px h-px w-[14px] bg-[#aab0b6]" />
        </Combo>
        <Combo label="플롯 스타일" value="색상별" width="mx-px w-[50px]" color="text-[#868d96]" />
        <Sep />
        <Tools names={DIM_TOOLS} />
        <Combo label="치수 스타일" value="STANDARD" width="w-[40px]" />
        <Tool name="dimStyle" />
      </div>

      <main className="flex min-h-0 flex-1 gap-[3px] pr-px">
        <div className="flex min-w-0 flex-1 flex-col">
          <div className="flex min-h-0 flex-1">
            <div className="w-[13px] shrink-0 pr-px pt-[2px]">
              <VerticalTools names={DRAW_TOOLS} />
            </div>
            <div className="flex min-w-0 flex-1 flex-col bg-[#2b2e33]">
              <div className="flex h-[11px] shrink-0 items-center pt-px">
                <div className="flex w-[5px] justify-center"><Icon name="caret" className="size-[4px]" /></div>
                <DocTab name="b-b단면도.dwg" active />
                <DocTab name="a-a_c-c단면도.dwg" />
                <button aria-label="새 도면" className="flex h-[11px] w-[12px] items-center justify-center bg-[#3a424d]">
                  <Icon name="new" className="size-[7px]" />
                </button>
              </div>
              <div className="relative min-h-0 flex-1 bg-[#1c1f24]">
                <Drawing />
                <div className="absolute right-[3px] top-[2px] flex gap-[2px] text-[#dcdfe2]">
                  <button aria-label="도면 최소화"><Icon name="min" className="size-[6px]" /></button>
                  <button aria-label="도면 복원"><Icon name="max" className="size-[6px]" /></button>
                  <button aria-label="도면 닫기"><Icon name="close" className="size-[6px]" /></button>
                </div>
              </div>
              <div className="flex h-[7px] shrink-0 items-center leading-[7px] text-[#d4d9de]">
                {["caretUp", "first", "prev", "next", "last"].map((n) => (
                  <button key={n} aria-label={n} className="flex w-[7px] justify-center"><Icon name={n} className="size-[5px]" /></button>
                ))}
                <button className="h-[7px] w-[20px] bg-[#4a607d] font-bold text-white">모델</button>
                <button className="ml-[2px] h-[7px] w-[21px] bg-[#393f48]">배치1</button>
                <button className="ml-[2px] h-[7px] w-[12px] bg-[#393f48]">+</button>
              </div>
            </div>
            <div className="ml-px w-[12px] shrink-0 pt-[2px]">
              <VerticalTools names={MODIFY_TOOLS} />
              <VerticalTools names={ORDER_TOOLS} />
            </div>
          </div>

          <div className="mt-px flex h-[41px] shrink-0 border-t border-[#454b54] bg-[#2b2e33] text-[7px] text-[#a9aeb3]">
            <div className="w-[10px] bg-[#414856] pl-[2px] pt-px"><Icon name="xGray" className="size-[5px]" /></div>
            <div className="flex min-w-0 flex-1 flex-col pl-px">
              <div className="flex-1 whitespace-pre leading-[7px]">
                {["명령:", "명령:", "명령: _CT_MPL", "명령:"].map((l, i) => <p key={i} className={i % 2 ? "h-[8px]" : "h-[7px]"}>{l}</p>)}
              </div>
              <label className="flex h-[10px] items-center border-t border-[#454b54]">
                프레임 선택:
                <span className="h-[7px] w-px bg-[#a9aeb3]" />
                <input className="min-w-0 flex-1 bg-transparent text-[7px]" />
              </label>
            </div>
            <div className="mb-[10px] flex w-[6px] flex-col items-center bg-[#383d45] py-px">
              <Icon name="caretUp" className="size-[4px] opacity-40" />
              <div className="flex-1" />
              <div className="h-[7px] w-full bg-[#5a636e]" />
              <Icon name="caret" className="mt-px size-[4px] opacity-40" />
            </div>
          </div>
        </div>
        <div className="flex shrink-0 gap-[3px] pt-px">
          <Calculator />
          <Properties />
        </div>
      </main>

      <footer className="flex h-[11px] shrink-0 items-center bg-[#2d3641] pr-px text-[#e4e7ea]">
        <span className="w-[118px] pl-[5px]">6721, 22970, 0</span>
        <div className="flex flex-1 gap-px">
          {STATUS.map((s) => (
            <button key={s.icon} aria-label={s.icon} className={`flex size-[9px] items-center justify-center ${s.on ? "bg-[#386c9b]" : ""}`}>
              <Icon name={s.icon} className="size-[7px]" />
            </button>
          ))}
        </div>
        <div className="flex items-center gap-[2px]">
          <Icon name="anno" className="size-[7px]" />
          <button className="flex items-center text-[#8a929b]">1:1<Icon name="caret" className="size-[5px]" /></button>
          <Icon name="annoY" className="ml-[4px] size-[7px]" />
          <Icon name="anno" className="size-[7px]" />
          <Icon name="gear" className="size-[7px]" />
          <Icon name="full" className="size-[7px]" />
        </div>
      </footer>
    </div>
  );
}
